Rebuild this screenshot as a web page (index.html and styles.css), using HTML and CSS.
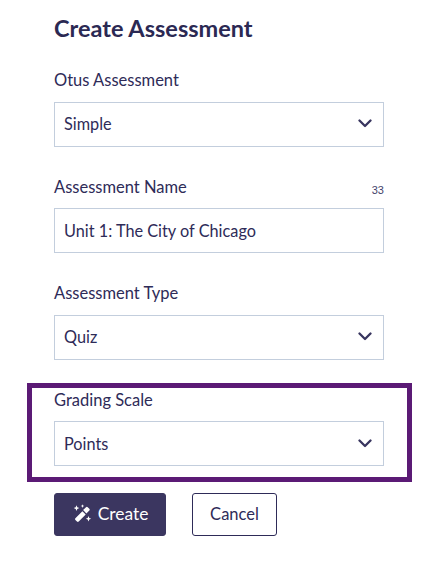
FILE: index.html
```html
<!DOCTYPE html>
<html lang="en">
<head>
<meta charset="utf-8">
<title>Create Assessment</title>
<link rel="stylesheet" href="styles.css">
</head>
<body>
<main class="form">
  <h1 class="title">Create Assessment</h1>
  <div class="field">
    <div class="label-row"><span class="label">Otus Assessment</span></div>
    <div class="control"><span>Simple</span><svg class="chevron" viewBox="0 0 14 9"><path d="M1.5 1.5 7 7l5.5-5.5"/></svg></div>
  </div>
  <div class="field">
    <div class="label-row"><span class="label">Assessment Name</span><span class="count">33</span></div>
    <div class="control"><span>Unit 1: The City of Chicago</span></div>
  </div>
  <div class="field">
    <div class="label-row"><span class="label">Assessment Type</span></div>
    <div class="control"><span>Quiz</span><svg class="chevron" viewBox="0 0 14 9"><path d="M1.5 1.5 7 7l5.5-5.5"/></svg></div>
  </div>
  <div class="field">
    <div class="label-row"><span class="label">Grading Scale</span></div>
    <div class="control"><span>Points</span><svg class="chevron" viewBox="0 0 14 9"><path d="M1.5 1.5 7 7l5.5-5.5"/></svg></div>
  </div>
  <div class="actions">
    <button class="btn primary" type="button">
      <svg class="wand" viewBox="0 0 20 20">
        <path class="wand-fill" d="M14 3.2a1.2 1.2 0 0 1 1.7 0l1.6 1.6a1.2 1.2 0 0 1 0 1.7l-2.9 2.9-3.3-3.3z"/>
        <path class="wand-fill" d="M10.4 7.3l3.3 3.3-7 7a1.2 1.2 0 0 1-1.7 0l-1.6-1.6a1.2 1.2 0 0 1 0-1.7z"/>
        <path class="wand-fill" d="M4.5 1.3l.8 2 2 .8-2 .8-.8 2-.8-2-2-.8 2-.8zM10.5.3l.5 1.3 1.3.5-1.3.5-.5 1.3-.5-1.3-1.3-.5 1.3-.5zM16.5 12l.8 1.9 1.9.8-1.9.8-.8 1.9-.8-1.9-1.9-.8 1.9-.8z"/>
      </svg>
      <span class="btn-text">Create</span>
    </button>
    <button class="btn secondary" type="button">Cancel</button>
  </div>
</main>
<div class="highlight"></div>
</body>
</html>
```
FILE: styles.css
```css
* { box-sizing: border-box; }
html, body { margin: 0; padding: 0; background: #fff; }
body {
  position: relative;
  width: 434px;
  height: 580px;
  overflow: hidden;
  font-family: Lato, "Liberation Sans", sans-serif;
  color: #2e2b58;
}
.form { padding: 14px 50px 0 54px; }
.title {
  margin: 0 0 27px;
  font-size: 23.5px;
  line-height: 29px;
  font-weight: 700;
  color: #2b2953;
}
.field + .field { margin-top: 30px; }
.label-row {
  display: flex;
  justify-content: space-between;
  align-items: flex-end;
  height: 20px;
  margin-bottom: 11.5px;
}
.label { font-size: 16.5px; line-height: 20px; }
.count {
  font-family: "Liberation Sans", Arial, sans-serif;
  font-size: 11px;
  line-height: 14px;
  color: #45436a;
}
.control {
  display: flex;
  align-items: center;
  justify-content: space-between;
  height: 45px;
  padding: 0 11px 1px 9px;
  border: 1px solid #c3cedd;
  font-size: 16.3px;
}
.chevron { width: 14px; height: 9px; }
.chevron path {
  fill: none;
  stroke: #38355f;
  stroke-width: 2.3;
  stroke-linecap: round;
  stroke-linejoin: round;
}
.actions { display: flex; gap: 26px; margin-top: 27px; }
.btn {
  display: flex;
  align-items: center;
  justify-content: center;
  height: 43px;
  font-family: Lato, "Liberation Sans", sans-serif;
  font-size: 16.5px;
  line-height: 20px;
  border-radius: 3px;
  padding: 0 0 1px;
}
.primary {
  width: 112px;
  gap: 6px;
  background: #3b3660;
  border: 1px solid #3b3660;
  color: #fff;
}
.btn-text { font-size: 17.4px; }
.secondary {
  width: 85px;
  background: #fff;
  border: 1px solid #2e2b58;
  color: #2e2b58;
}
.wand { width: 20px; height: 20px; }
.wand-fill { fill: #fff; }
.highlight {
  position: absolute;
  left: 27px;
  top: 383px;
  width: 385px;
  height: 99px;
  border: 5px solid #5b1a75;
  pointer-events: none;
}
```
